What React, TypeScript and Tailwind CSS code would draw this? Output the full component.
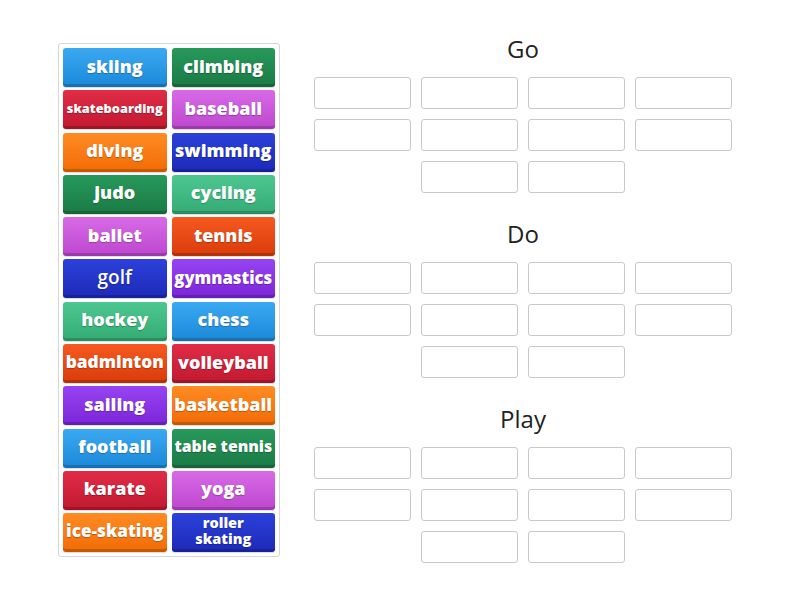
import React from "react"

const tones: Record<string, string> = {
  blue: "from-[#3aa9f1] to-[#1b88d9]",
  dkgreen: "from-[#27995b] to-[#1b7a45]",
  red: "from-[#e12c47] to-[#c1192f]",
  pink: "from-[#d86ae6] to-[#bd46cf]",
  orange: "from-[#ff8b22] to-[#f26b02]",
  navy: "from-[#2c41da] to-[#1d29b9]",
  teal: "from-[#4dc792] to-[#33ab73]",
  redorange: "from-[#f6581f] to-[#d93c09]",
  purple: "from-[#9843f2] to-[#7b24d9]",
}

const tiles: { label: string; tone: string; size?: string }[] = [
  { label: "skiing", tone: "blue" },
  { label: "climbing", tone: "dkgreen" },
  { label: "skateboarding", tone: "red", size: "text-[12.8px]" },
  { label: "baseball", tone: "pink" },
  { label: "diving", tone: "orange" },
  { label: "swimming", tone: "navy" },
  { label: "judo", tone: "dkgreen" },
  { label: "cycling", tone: "teal" },
  { label: "ballet", tone: "pink" },
  { label: "tennis", tone: "redorange" },
  { label: "golf", tone: "navy", size: "text-[19px] !font-semibold" },
  { label: "gymnastics", tone: "purple", size: "text-[16.7px]" },
  { label: "hockey", tone: "teal" },
  { label: "chess", tone: "blue" },
  { label: "badminton", tone: "redorange", size: "text-[17.3px]" },
  { label: "volleyball", tone: "red" },
  { label: "sailing", tone: "purple" },
  { label: "basketball", tone: "orange" },
  { label: "football", tone: "blue" },
  { label: "table tennis", tone: "dkgreen", size: "text-[15.8px]" },
  { label: "karate", tone: "red" },
  { label: "yoga", tone: "pink" },
  { label: "ice-skating", tone: "orange", size: "text-[17.2px]" },
  { label: "roller skating", tone: "navy", size: "text-[14.5px] leading-[16px] px-5" },
]

function Tile({ label, tone, size }: { label: string; tone: string; size?: string }) {
  return (
    <div
      className={`h-[39px] pb-[3px] rounded-[3px] bg-linear-to-b ${tones[tone]} shadow-[inset_0_-3px_0_rgba(0,0,0,0.18),0_1px_1px_rgba(0,0,0,0.15)] flex items-center justify-center text-center text-white font-extrabold whitespace-normal [text-shadow:0_1px_1px_rgba(0,0,0,0.25)] ${size ?? "text-[18px]"}`}
    >
      {label}
    </div>
  )
}

function Box() {
  return <div className="h-[32px] rounded-[3px] border border-[#c9c9c9] bg-white" />
}

function Group({ title }: { title: string }) {
  return (
    <div className="flex flex-col">
      <div className="text-center text-[24px] leading-[32px] text-[#222] mb-[12px]">{title}</div>
      <div className="grid grid-cols-4 gap-x-[10px] gap-y-[10px]">
        {Array.from({ length: 8 }).map((_, i) => (
          <Box key={i} />
        ))}
        <div />
        <Box />
        <Box />
        <div />
      </div>
    </div>
  )
}

export default function App() {
  return (
    <div className="w-[800px] h-[600px] bg-white flex items-start pl-[58px] pt-[43px] font-['Open_Sans',sans-serif]">
      <div className="w-[222px] border border-[#d6d6d6] rounded-[3px] p-[4px] grid grid-cols-2 gap-x-[5px] gap-y-[3.3px]">
        {tiles.map((t) => (
          <Tile key={t.label} {...t} />
        ))}
      </div>
      <div className="ml-[34px] w-[418px] -mt-[10px] flex flex-col gap-[25px]">
        <Group title="Go" />
        <Group title="Do" />
        <Group title="Play" />
      </div>
    </div>
  )
}
